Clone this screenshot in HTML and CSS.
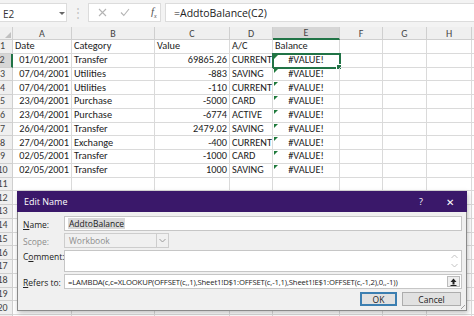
FILE: index.html
```html
<!DOCTYPE html>
<html lang="en">
<head>
    <meta charset="utf-8">
    <title>Edit Name</title>
    <link rel="stylesheet" href="styles.css">
</head>
<body>
    <!-- Formula bar -->
    <div class="formula-bar">
        <div class="name-box">E2<span class="caret"></span></div>
        <div class="grip">⋮</div>
        <div class="fx-buttons">
            <svg width="9" height="9" viewBox="0 0 9 9"><path d="M1 1L8 8M8 1L1 8" stroke="#b4b4b4" stroke-width="1.1" fill="none"/></svg>
            <svg width="10" height="9" viewBox="0 0 10 9"><path d="M1 4.5L3.8 7.5L9 1" stroke="#b4b4b4" stroke-width="1.1" fill="none"/></svg>
            <span class="fx">f<sub>x</sub></span>
        </div>
        <div class="formula">=AddtoBalance(C2)</div>
    </div>

    <!-- Worksheet -->
    <table class="sheet">
        <colgroup>
            <col class="w-row"><col class="w-a"><col class="w-b"><col class="w-c"><col class="w-d">
            <col class="w-e"><col class="w-f"><col class="w-g"><col class="w-h"><col class="w-i">
        </colgroup>
        <tr class="head">
            <th class="corner"></th><th>A</th><th>B</th><th>C</th><th>D</th>
            <th class="on">E</th><th>F</th><th>G</th><th>H</th><th></th>
        </tr>
        <tr><th>1</th><td>Date</td><td>Category</td><td>Value</td><td>A/C</td><td>Balance</td><td></td><td></td><td></td><td></td></tr>
        <tr><th class="on">2</th><td class="num">01/01/2001</td><td>Transfer</td><td class="num">69865.26</td><td>CURRENT</td><td class="err active">#VALUE!</td><td></td><td></td><td></td><td></td></tr>
        <tr><th>3</th><td class="num">07/04/2001</td><td>Utilities</td><td class="num">-883</td><td>SAVING</td><td class="err">#VALUE!</td><td></td><td></td><td></td><td></td></tr>
        <tr><th>4</th><td class="num">07/04/2001</td><td>Utilities</td><td class="num">-110</td><td>CURRENT</td><td class="err">#VALUE!</td><td></td><td></td><td></td><td></td></tr>
        <tr><th>5</th><td class="num">23/04/2001</td><td>Purchase</td><td class="num">-5000</td><td>CARD</td><td class="err">#VALUE!</td><td></td><td></td><td></td><td></td></tr>
        <tr><th>6</th><td class="num">23/04/2001</td><td>Purchase</td><td class="num">-6774</td><td>ACTIVE</td><td class="err">#VALUE!</td><td></td><td></td><td></td><td></td></tr>
        <tr><th>7</th><td class="num">26/04/2001</td><td>Transfer</td><td class="num">2479.02</td><td>SAVING</td><td class="err">#VALUE!</td><td></td><td></td><td></td><td></td></tr>
        <tr><th>8</th><td class="num">27/04/2001</td><td>Exchange</td><td class="num">-400</td><td>CURRENT</td><td class="err">#VALUE!</td><td></td><td></td><td></td><td></td></tr>
        <tr><th>9</th><td class="num">02/05/2001</td><td>Transfer</td><td class="num">-1000</td><td>CARD</td><td class="err">#VALUE!</td><td></td><td></td><td></td><td></td></tr>
        <tr><th>10</th><td class="num">02/05/2001</td><td>Transfer</td><td class="num">1000</td><td>SAVING</td><td class="err">#VALUE!</td><td></td><td></td><td></td><td></td></tr>
        <tr><th>11</th><td></td><td></td><td></td><td></td><td></td><td></td><td></td><td></td><td></td></tr>
        <tr><th>12</th><td></td><td></td><td></td><td></td><td></td><td></td><td></td><td></td><td></td></tr>
        <tr><th>13</th><td></td><td></td><td></td><td></td><td></td><td></td><td></td><td></td><td></td></tr>
        <tr><th>14</th><td></td><td></td><td></td><td></td><td></td><td></td><td></td><td></td><td></td></tr>
        <tr><th>15</th><td></td><td></td><td></td><td></td><td></td><td></td><td></td><td></td><td></td></tr>
        <tr><th>16</th><td></td><td></td><td></td><td></td><td></td><td></td><td></td><td></td><td></td></tr>
        <tr><th>17</th><td></td><td></td><td></td><td></td><td></td><td></td><td></td><td></td><td></td></tr>
        <tr><th>18</th><td></td><td></td><td></td><td></td><td></td><td></td><td></td><td></td><td></td></tr>
        <tr><th>19</th><td></td><td></td><td></td><td></td><td></td><td></td><td></td><td></td><td></td></tr>
        <tr><th>20</th><td></td><td></td><td></td><td></td><td></td><td></td><td></td><td></td><td></td></tr>
        <tr><th>21</th><td></td><td></td><td></td><td></td><td></td><td></td><td></td><td></td><td></td></tr>
    </table>

    <!-- Edit Name dialog -->
    <div class="dialog">
        <div class="dialog-title">
            <span>Edit Name</span>
            <span class="title-btns"><span>?</span><span class="close">✕</span></span>
        </div>
        <div class="dialog-body">
            <div class="field">
                <label><u>N</u>ame:</label>
                <div class="input"><span class="picked">AddtoBalance</span></div>
            </div>
            <div class="field">
                <label class="off">Scope:</label>
                <div class="select">
                    <span>Workbook</span>
                    <span class="drop"><svg width="7" height="5" viewBox="0 0 7 5"><path d="M0.5 1L3.5 4L6.5 1" stroke="#9a9a9a" fill="none"/></svg></span>
                </div>
            </div>
            <div class="field tall">
                <label>C<u>o</u>mment:</label>
                <div class="input area">
                    <span class="scroll">
                        <svg width="7" height="5" viewBox="0 0 7 5"><path d="M0.5 4L3.5 1L6.5 4" stroke="#c2c2c2" fill="none"/></svg>
                        <svg width="7" height="5" viewBox="0 0 7 5"><path d="M0.5 1L3.5 4L6.5 1" stroke="#c2c2c2" fill="none"/></svg>
                    </span>
                </div>
            </div>
            <div class="field">
                <label><u>R</u>efers to:</label>
                <div class="input">
                    <span class="ref">=LAMBDA(c,c=XLOOKUP(OFFSET(c,,1),Sheet1!D$1:OFFSET(c,-1,1),Sheet1!E$1:OFFSET(c,-1,2),0,,-1))</span>
                    <span class="collapse"><svg width="7" height="8" viewBox="0 0 7 8"><path d="M3.5 0.5L6.5 4H4.5V6.5H2.5V4H0.5Z" fill="#222"/><path d="M0.5 7.5H6.5" stroke="#222"/></svg></span>
                </div>
            </div>
            <div class="buttons">
                <button class="default">OK</button>
                <button class="cancel">Cancel</button>
            </div>
        </div>
        <span class="grip-corner"></span>
    </div>
</body>
</html>
```

FILE: styles.css
```css
* {
    box-sizing: border-box;
    margin: 0;
    padding: 0;
}

body {
    width: 474px;
    height: 316px;
    overflow: hidden;
    position: relative;
    background: #fff;
    font-family: Carlito, "Liberation Sans Narrow", Roboto, sans-serif;
    color: #222;
}

/* Formula bar */
.formula-bar {
    display: flex;
    align-items: flex-start;
    height: 27px;
    padding-top: 3px;
    background: #f3f3f3;
    font-family: "Open Sans", sans-serif;
}

.name-box {
    position: relative;
    width: 67px;
    height: 19px;
    padding: 3px 0 0 3px;
    background: #fff;
    border: 1px solid #dcdcdc;
    border-left: none;
    font-size: 10px;
    color: #333;
}

.caret {
    position: absolute;
    left: 59px;
    top: 8px;
    border: 3px solid transparent;
    border-top: 3px solid #666;
}

.grip {
    width: 21px;
    text-align: center;
    font-size: 12px;
    line-height: 19px;
    color: #c4c4c4;
}

.fx-buttons {
    display: flex;
    align-items: center;
    gap: 13px;
    width: 73px;
    height: 19px;
    padding-left: 9px;
    background: #fff;
    border: 1px solid #dcdcdc;
}

.fx {
    margin-left: 8px;
    font-family: "Liberation Serif", serif;
    font-style: italic;
    font-size: 11px;
    color: #555;
}

.fx sub {
    font-size: 6px;
}

.formula {
    flex: 1;
    height: 19px;
    margin-left: 4px;
    padding: 2px 0 0 8px;
    background: #fff;
    border: 1px solid #dcdcdc;
    border-right: none;
    font-size: 10.5px;
    color: #222;
}

/* Worksheet */
.sheet {
    margin-left: -7px;
    border-collapse: separate;
    border-spacing: 0;
    table-layout: fixed;
    width: 521px;
    font-size: 10.3px;
}

.w-row { width: 20px; }
.w-a { width: 59px; }
.w-b { width: 83px; }
.w-c { width: 75px; }
.w-d { width: 43px; }
.w-e { width: 67px; }
.w-f { width: 43px; }
.w-g { width: 44px; }
.w-h { width: 45px; }
.w-i { width: 42px; }

.sheet tr {
    height: 13.75px;
}

.sheet tr.head {
    height: 12px;
}

.sheet th,
.sheet td {
    border-right: 1px solid #dadada;
    border-bottom: 1px solid #dadada;
    padding: 0 2px;
    white-space: nowrap;
    overflow: hidden;
    line-height: 12px;
    position: relative;
}

.sheet th {
    background: #efefef;
    border-color: #cfcfcf;
    font-weight: normal;
    color: #444;
    text-align: center;
    font-size: 10px;
}

.sheet .head th {
    line-height: 11px;
}

.sheet th.on {
    background: #d6d6d6;
}

.head th.on {
    border-bottom: 2px solid #217346;
}

tr th.on:first-child {
    border-right: 2px solid #217346;
}

.corner::after {
    content: "";
    position: absolute;
    right: 1px;
    bottom: 1px;
    border: 3px solid transparent;
    border-right-color: #c0c0c0;
    border-bottom-color: #c0c0c0;
}

.sheet td.num {
    text-align: right;
}

.sheet td.err {
    text-align: center;
}

.err::before {
    content: "";
    position: absolute;
    left: 1px;
    top: 1px;
    border: 2px solid transparent;
    border-left-color: #1f7a3c;
    border-top-color: #1f7a3c;
}

.sheet td.active {
    outline: 2px solid #217346;
    outline-offset: -1px;
    overflow: visible;
}

.active::after {
    content: "";
    position: absolute;
    right: -3px;
    bottom: -3px;
    width: 4px;
    height: 4px;
    background: #217346;
    border: 1px solid #fff;
}

/* Dialog */
.dialog {
    position: absolute;
    left: 17px;
    top: 191px;
    width: 450px;
    height: 120px;
    background: #f0f0f0;
    border: 1px solid #8a8a8a;
    box-shadow: 1px 2px 5px rgba(0, 0, 0, 0.25);
    font-family: "Open Sans", sans-serif;
    font-size: 8.5px;
    color: #222;
}

.dialog-title {
    display: flex;
    justify-content: space-between;
    align-items: center;
    height: 21px;
    margin: -1px -1px 0;
    padding: 0 13px 0 7px;
    background: #3a186a;
    color: #fff;
    font-size: 9px;
}

.title-btns {
    display: flex;
    gap: 23px;
    font-size: 9px;
}

.close {
    font-size: 10px;
}

.dialog-body {
    display: flex;
    flex-direction: column;
    gap: 2px;
    padding: 4px 4px 0 5px;
}

.field {
    display: flex;
    align-items: center;
    height: 15px;
}

.field.tall {
    align-items: flex-start;
    height: 22px;
}

.field label {
    width: 41px;
    padding-top: 1px;
}

.field label.off {
    color: #8d8d8d;
}

.input {
    flex: 1;
    display: flex;
    align-items: center;
    height: 100%;
    padding-left: 3px;
    background: #fff;
    border: 1px solid #c6c6c6;
}

.picked {
    background: #d9d9d9;
    padding: 0 1px;
}

.area {
    justify-content: flex-end;
    padding-left: 0;
}

.scroll {
    display: flex;
    flex-direction: column;
    gap: 4px;
    margin-right: 3px;
}

.ref {
    flex: 1;
    font-size: 7.7px;
    white-space: nowrap;
    overflow: hidden;
    letter-spacing: -0.15px;
}

.collapse {
    display: flex;
    align-items: center;
    justify-content: center;
    width: 13px;
    height: 11px;
    margin-right: 1px;
    background: #eee;
    border: 1px solid #bbb;
}

.select {
    display: flex;
    align-items: center;
    justify-content: space-between;
    width: 105px;
    height: 100%;
    padding-left: 4px;
    border: 1px solid #cdcdcd;
    color: #8d8d8d;
}

.drop {
    display: flex;
    align-items: center;
    justify-content: center;
    width: 12px;
    height: 100%;
    border-left: 1px solid #cdcdcd;
}

.buttons {
    display: flex;
    justify-content: flex-end;
    gap: 5px;
    margin-top: 1px;
    padding-right: 1px;
}

.buttons button {
    height: 14px;
    background: #e1e1e1;
    border: 1px solid #adadad;
    font-family: "Open Sans", sans-serif;
    font-size: 8.5px;
    color: #222;
}

.buttons .default {
    width: 37px;
    border: 2px solid #3c7fb1;
}

.buttons .cancel {
    width: 59px;
}

.grip-corner {
    position: absolute;
    right: 1px;
    bottom: 1px;
    width: 5px;
    height: 5px;
    background: linear-gradient(135deg, transparent 55%, #a0a0a0 55%, #a0a0a0 65%, transparent 65%);
}
```
